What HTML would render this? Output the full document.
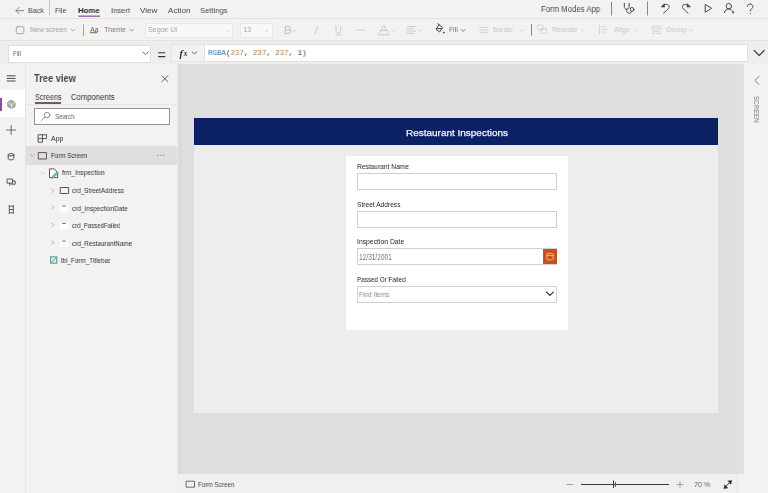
<!DOCTYPE html>
<html><head><meta charset="utf-8">
<style>
*{margin:0;padding:0;box-sizing:border-box}
html,body{width:768px;height:493px;overflow:hidden;background:#f3f2f1;font-family:"Liberation Sans",sans-serif;color:#323130}
.a{position:absolute}
.t{position:absolute;white-space:nowrap;line-height:1;transform-origin:0 0;will-change:transform}
svg{position:absolute;overflow:visible}
</style></head><body>
<!-- top bar -->
<div class="a" style="left:0;top:0;width:768px;height:18px;background:#f3f2f1"></div>
<div class="a" style="left:0;top:18px;width:768px;height:1px;background:#e4e2e0"></div>
<!-- toolbar -->
<div class="a" style="left:0;top:19px;width:768px;height:22px;background:#f3f2f1"></div>
<div class="a" style="left:0;top:40px;width:768px;height:1px;background:#e4e2e0"></div>
<!-- formula row -->
<div class="a" style="left:0;top:41px;width:768px;height:23px;background:#efeeed"></div>
<div class="a" style="left:8px;top:45px;width:143px;height:17.5px;background:#fff;border:1px solid #e1dfdd"></div>
<div class="a" style="left:171px;top:44px;width:34px;height:18px;background:#f3f2f1;border:1px solid #e6e4e2"></div>
<div class="a" style="left:204px;top:44px;width:544px;height:18px;background:#fff;border:1px solid #e1dfdd"></div>
<!-- left rail -->
<div class="a" style="left:0;top:64px;width:26px;height:429px;background:#f3f2f1;border-right:1px solid #e6e4e2"></div>
<div class="a" style="left:0;top:90px;width:25px;height:27px;background:#fff"></div>
<div class="a" style="left:0;top:97.5px;width:2px;height:13.5px;background:#8a4a9c"></div>
<!-- tree panel -->
<div class="a" style="left:26px;top:64px;width:152px;height:429px;background:#f3f2f1;border-right:1px solid #ebeae9"></div>
<div class="a" style="left:27px;top:104px;width:150px;height:1px;background:#e8e6e4"></div>
<div class="a" style="left:34.5px;top:102px;width:26.5px;height:2px;background:#6f557f"></div>
<div class="a" style="left:34px;top:108px;width:136px;height:17px;background:#fff;border:1px solid #979593"></div>
<div class="a" style="left:26px;top:146px;width:151px;height:19px;background:#e1dfdd"></div>
<!-- canvas -->
<div class="a" style="left:178px;top:64px;width:566px;height:410px;background:#dfdfdf"></div>
<div class="a" style="left:178px;top:64px;width:4px;height:410px;background:#dadada"></div>
<!-- status bar -->
<div class="a" style="left:178px;top:474px;width:566px;height:19px;background:#f0f0f0"></div>
<div class="a" style="left:737px;top:64px;width:7px;height:410px;background:#e1e1e1"></div>
<div class="a" style="left:737px;top:474px;width:7px;height:19px;background:#f3f3f3;border-left:1px solid #e6e6e6"></div>
<!-- right panel -->
<div class="a" style="left:744px;top:64px;width:24px;height:429px;background:#f3f2f1"></div>
<!-- screen -->
<div class="a" style="left:194px;top:117.5px;width:524px;height:295px;background:#ededed"></div>
<div class="a" style="left:194px;top:118px;width:523.5px;height:26.5px;background:#0b2163"></div>
<div class="a" style="left:346px;top:156px;width:222px;height:174px;background:#fff"></div>
<!-- form inputs -->
<div class="a" style="left:357px;top:173px;width:200px;height:17px;border:1px solid #d2d0ce;background:#fff"></div>
<div class="a" style="left:357px;top:211px;width:200px;height:17px;border:1px solid #d2d0ce;background:#fff"></div>
<div class="a" style="left:357px;top:248px;width:200px;height:17px;border:1px solid #d2d0ce;background:#fff"></div>
<div class="a" style="left:543px;top:248.5px;width:14px;height:15.5px;background:#c8501e"></div>
<div class="a" style="left:357px;top:286px;width:200px;height:17px;border:1px solid #d2d0ce;background:#fff"></div>
<div class="a" style="left:145px;top:23px;width:88px;height:15px;background:#f8f8f8;border:1px solid #ebe9e7"></div>
<div class="a" style="left:240px;top:23px;width:33px;height:15px;background:#f8f8f8;border:1px solid #ebe9e7"></div>
<!-- TEXTS -->
<div class="t" style="left:28.38px;top:6.54px;font-size:8.1px;color:#484644;transform:scaleX(0.882)">Back</div>
<div class="t" style="left:55.38px;top:6.54px;font-size:8.1px;color:#484644;transform:scaleX(0.879)">File</div>
<div class="t" style="left:78.28px;top:6.54px;font-size:8.1px;font-weight:700;color:#252423;transform:scaleX(0.966)">Home</div>
<div class="t" style="left:110.58px;top:6.54px;font-size:8.1px;color:#484644;transform:scaleX(0.934)">Insert</div>
<div class="t" style="left:140.18px;top:6.54px;font-size:8.1px;color:#484644;transform:scaleX(0.979)">View</div>
<div class="t" style="left:167.68px;top:6.54px;font-size:8.1px;color:#484644;transform:scaleX(0.993)">Action</div>
<div class="t" style="left:200.48px;top:6.54px;font-size:8.1px;color:#484644;transform:scaleX(0.937)">Settings</div>
<div class="t" style="left:540.90px;top:5.27px;font-size:8.66px;color:#484644;transform:scaleX(0.898)">Form Modes App</div>
<div class="t" style="left:29.58px;top:26.16px;font-size:7.96px;color:#a19f9d;transform:scaleX(0.885)">New screen</div>
<div class="t" style="left:103.98px;top:26.16px;font-size:7.96px;color:#797775;transform:scaleX(0.883)">Theme</div>
<div class="t" style="left:148.18px;top:26.16px;font-size:7.96px;color:#a19f9d;transform:scaleX(0.882)">Segoe UI</div>
<div class="t" style="left:243.43px;top:26.16px;font-size:7.96px;color:#a19f9d;transform:scaleX(0.912)">13</div>
<div class="t" style="left:449.48px;top:26.16px;font-size:7.96px;color:#797775;transform:scaleX(0.860)">Fill</div>
<div class="t" style="left:493.48px;top:26.16px;font-size:7.96px;color:#c8c6c4;transform:scaleX(0.839)">Border</div>
<div class="t" style="left:551.68px;top:26.16px;font-size:7.96px;color:#c8c6c4;transform:scaleX(0.900)">Reorder</div>
<div class="t" style="left:614.38px;top:26.16px;font-size:7.96px;color:#c8c6c4;transform:scaleX(0.909)">Align</div>
<div class="t" style="left:666.28px;top:26.16px;font-size:7.96px;color:#c8c6c4;transform:scaleX(0.936)">Group</div>
<div class="t" style="left:13.21px;top:49.85px;font-size:7.26px;color:#605e5c;transform:scaleX(0.852)">Fill</div>
<div class="t" style="left:34.18px;top:73.42px;font-size:10.61px;font-weight:700;color:#484644;transform:scaleX(0.878)">Tree view</div>
<div class="t" style="left:34.66px;top:93.31px;font-size:8.38px;color:#323130;transform:scaleX(0.865)">Screens</div>
<div class="t" style="left:71.36px;top:93.31px;font-size:8.38px;color:#323130;transform:scaleX(0.920)">Components</div>
<div class="t" style="left:54.68px;top:112.54px;font-size:8.1px;color:#605e5c;transform:scaleX(0.750)">Search</div>
<div class="t" style="left:50.65px;top:136.08px;font-size:6.28px;color:#323130;transform:scaleX(1.108)">App</div>
<div class="t" style="left:50.62px;top:153.07px;font-size:7.12px;color:#323130;transform:scaleX(0.876)">Form Screen</div>
<div class="t" style="left:61.92px;top:170.47px;font-size:7.12px;color:#323130;transform:scaleX(0.914)">frm_Inspection</div>
<div class="t" style="left:72.42px;top:187.77px;font-size:7.12px;color:#323130;transform:scaleX(0.883)">crd_StreetAddress</div>
<div class="t" style="left:72.42px;top:205.67px;font-size:7.12px;color:#323130;transform:scaleX(0.909)">crd_InspectionDate</div>
<div class="t" style="left:72.42px;top:222.97px;font-size:7.12px;color:#323130;transform:scaleX(0.850)">crd_PassedFailed</div>
<div class="t" style="left:72.42px;top:240.67px;font-size:7.12px;color:#323130;transform:scaleX(0.892)">crd_RestaurantName</div>
<div class="t" style="left:61.42px;top:257.77px;font-size:7.12px;color:#323130;transform:scaleX(0.897)">lbl_Form_Titlebar</div>
<div class="t" style="left:405.81px;top:127.99px;font-size:9.7px;color:#f4f4f8;-webkit-text-stroke:0.25px #f4f4f8;transform:scaleX(1.029)">Restaurant Inspections</div>
<div class="t" style="left:357.43px;top:163.81px;font-size:6.84px;color:#201f1e;transform:scaleX(0.970)">Restaurant Name</div>
<div class="t" style="left:357.34px;top:201.85px;font-size:6.56px;color:#201f1e;transform:scaleX(1.013)">Street Address</div>
<div class="t" style="left:357.35px;top:239.08px;font-size:6.28px;color:#201f1e;transform:scaleX(1.085)">Inspection Date</div>
<div class="t" style="left:359.26px;top:253.21px;font-size:8.38px;color:#797775;transform:scaleX(0.785)">12/31/2001</div>
<div class="t" style="left:357.39px;top:275.70px;font-size:7.68px;color:#201f1e;transform:scaleX(0.822)">Passed Or Failed</div>
<div class="t" style="left:359.22px;top:291.09px;font-size:6.98px;color:#8a8886;transform:scaleX(0.932)">Find Items</div>
<div class="t" style="left:197.60px;top:480.54px;font-size:7.4px;color:#484644;transform:scaleX(0.855)">Form Screen</div>
<div class="t" style="left:694.30px;top:480.54px;font-size:7.4px;color:#605e5c;transform:scaleX(0.965)">70 %</div>

<!-- TOP BAR ICONS -->
<svg style="left:0;top:0" width="768" height="19">
 <g fill="none" stroke="#484644" stroke-width="1" stroke-linecap="round" stroke-linejoin="round">
  <path d="M16 10.7H23.6 M19 7.6L16 10.7L19 13.8" stroke="#797775" stroke-width="0.9"/>
  <path d="M624.3 3.4V6.6C624.3 8.2 625.4 9.2 626.7 9.2C628 9.2 629.1 8.2 629.1 6.6V3.4 M626.7 9.2V10.6C626.7 12.2 627.8 13.2 629.3 13.2C630.6 13.2 631.6 12.4 631.8 11.4"/>
  <circle cx="632" cy="9.4" r="1.9"/>
  <path d="M663.4 5.6C665.2 3.8 668.6 3.6 669.1 6.6C669.4 8.2 668.2 9.2 663.6 13"/>
  <path d="M687.6 5.6C686.4 3.8 683 3.6 682.5 6.6C682.2 8.2 683.4 9.2 688 13"/>
  <path d="M705.2 4.8V12.3L711.2 8.5Z"/>
  <circle cx="728.8" cy="6.2" r="2.7"/>
  <path d="M724.4 12.6C725 10.2 726.6 9 728.8 9C730.6 9 731.7 10 732.4 11.4"/>
  <path d="M747.3 6.5C747.3 4.9 748.6 4 750 4C751.6 4 752.9 5 752.9 6.6C752.9 8.5 750.2 8.8 750.2 11"/>
 </g>
 <path d="M661 6.9L664.4 3.6L664.6 7.1Z" fill="#484644" stroke="#484644" stroke-width="0.5" stroke-linejoin="round"/>
 <path d="M690.6 6.9L687.2 3.6L687 7.1Z" fill="#484644" stroke="#484644" stroke-width="0.5" stroke-linejoin="round"/>
 <circle cx="733.2" cy="12.6" r="1" fill="#484644"/>
 <circle cx="750.2" cy="13.3" r="0.6" fill="#484644"/>
 <rect x="49" y="0" width="1" height="15.5" fill="#c8c6c4"/>
 <rect x="611" y="2" width="1" height="13.5" fill="#8a8886"/>
 <rect x="647" y="1.5" width="1" height="14" fill="#8a8886"/>
 <rect x="78.5" y="15.5" width="21.5" height="1.4" fill="#9b62a8"/>
</svg>
<!-- TOOLBAR ICONS -->
<svg style="left:0;top:19px" width="768" height="22">
 <g fill="none" stroke-linecap="round" stroke-linejoin="round">
  <rect x="16.3" y="7.8" width="7.6" height="6.8" rx="1.2" stroke="#a19f9d" stroke-width="0.9"/>
  <path d="M71 10.2L72.9 12.1L74.8 10.2" stroke="#a19f9d" stroke-width="0.8"/>
  <path d="M129.8 10.2L131.7 12.1L133.6 10.2" stroke="#8a8886" stroke-width="0.8"/>
  <path d="M226 11.2L227.5 12.6L229 11.2" stroke="#c8c6c4" stroke-width="0.8"/>
  <path d="M265 11.2L266.5 12.6L268 11.2" stroke="#c8c6c4" stroke-width="0.8"/>
  <path d="M292.5 11.5L294 12.8L295.5 11.5" stroke="#c8c6c4" stroke-width="0.8"/>
  <path d="M461.4 10.6L463.2 12.4L465 10.6" stroke="#605e5c" stroke-width="0.8"/>
  <path d="M520.2 10.6L522 12.4L523.8 10.6" stroke="#c8c6c4" stroke-width="0.8"/>
  <path d="M581 10.6L582.8 12.4L584.6 10.6" stroke="#d2d0ce" stroke-width="0.8"/>
  <path d="M634.8 10.6L636.6 12.4L638.4 10.6" stroke="#d2d0ce" stroke-width="0.8"/>
  <path d="M689.2 10.6L691 12.4L692.8 10.6" stroke="#d2d0ce" stroke-width="0.8"/>
  <!-- B -->
  <path d="M285.3 7.5V14.4H288.6C290 14.4 290.8 13.6 290.8 12.5C290.8 11.4 290 10.8 288.6 10.8H285.3M285.3 10.8H288.2C289.4 10.8 290.1 10.2 290.1 9.2C290.1 8.2 289.4 7.5 288.2 7.5H285.3" stroke="#c8c6c4" stroke-width="1.2"/>
  <path d="M317.8 7.2L315 14.6" stroke="#c8c6c4" stroke-width="0.9"/>
  <path d="M336 7.2V11.6C336 13.2 337 14 338.3 14C339.6 14 340.6 13.2 340.6 11.6V7.2 M335.6 16H341" stroke="#c8c6c4" stroke-width="0.9"/>
  <path d="M356.8 11.2H364.6" stroke="#c8c6c4" stroke-width="0.9"/>
  <path d="M379.5 14L383.8 6L388 14 M381 11.5H386.5 M377.8 15.8H390" stroke="#c8c6c4" stroke-width="0.9"/>
  <path d="M392 10.8L393.5 12.2L395 10.8" stroke="#c8c6c4" stroke-width="0.8"/>
  <path d="M407 7.5H415.5 M407 9.8H413.5 M407 12H415.5 M407 14.3H413.5" stroke="#c8c6c4" stroke-width="0.9"/>
  <path d="M418 10.8L419.5 12.2L421 10.8" stroke="#c8c6c4" stroke-width="0.8"/>
  <!-- fill bucket -->
  <path d="M438.8 6L436 10.2L439.6 13L442.4 8.8Z M437 9.6H442 M439 5.8L437.8 4.7" stroke="#484644" stroke-width="1"/>
  <circle cx="443.8" cy="13.6" r="0.9" fill="#484644"/>
  <!-- border lines -->
  <path d="M479.8 8.6H487.8 M479.8 11H487.8 M479.8 13.4H487.8" stroke="#d2d0ce" stroke-width="0.9"/>
  <!-- reorder -->
  <rect x="538" y="6" width="5" height="5" stroke="#c9dcd8" stroke-width="0.9"/>
  <rect x="541.5" y="9.5" width="5" height="5" stroke="#d2d0ce" stroke-width="0.9"/>
  <!-- align -->
  <path d="M599.5 6.5V15 M601.5 8H606 M601.5 10.5H607.5 M601.5 13H605" stroke="#d2d0ce" stroke-width="0.9"/>
  <!-- group -->
  <rect x="652.5" y="7" width="7.5" height="7.5" stroke="#d2d0ce" stroke-width="0.9" stroke-dasharray="1.5 1"/>
  <rect x="654.5" y="9" width="3.5" height="3.5" stroke="#d2d0ce" stroke-width="0.9"/>
 </g>
 <text x="90.2" y="12.6" font-family="Liberation Sans" font-size="6.8" fill="#605e5c">Aa</text>
 <rect x="90" y="13" width="7.4" height="0.9" fill="#797775"/>
 <rect x="90.5" y="14" width="6.4" height="0.9" fill="#f2c9a8"/>
 <rect x="83" y="5.4" width="1" height="11.8" fill="#a19f9d"/>
 <rect x="531" y="5" width="1" height="11.6" fill="#8a8886"/>
</svg>
<!-- FORMULA ICONS -->
<svg style="left:0;top:41px" width="768" height="23">
 <g fill="none" stroke-linecap="round" stroke-linejoin="round">
  <path d="M142.8 11L145.5 13.6L148.2 11" stroke="#605e5c" stroke-width="0.9"/>
  <path d="M192.2 11L194.4 12.8L196.6 11" stroke="#605e5c" stroke-width="0.9"/>
  <path d="M754.2 9.5L759.2 14.5L764.2 9.5" stroke="#484644" stroke-width="1.2"/>
 </g>
 <path d="M158.2 11.8H165.2 M158.2 15.6H165.2" stroke="#323130" stroke-width="1.1"/>
 <text x="179.4" y="15.6" font-family="Liberation Serif" font-style="italic" font-weight="bold" font-size="10.5" fill="#323130">f</text>
 <text x="183.8" y="14.6" font-family="Liberation Serif" font-style="italic" font-weight="bold" font-size="7.5" fill="#323130">x</text>
</svg>
<!-- LEFT RAIL ICONS -->
<svg style="left:0;top:64px" width="26" height="160">
 <g fill="none" stroke="#484644" stroke-width="0.9" stroke-linecap="round" stroke-linejoin="round">
  <path d="M7.2 11.8H15.2 M7.2 14.4H15.2 M7.2 17H15.2" stroke-width="1"/>
  <path d="M11.4 36.5L15 38.5V42.5L11.4 44.5L7.8 42.5V38.5Z" fill="#b3b0ad" stroke="#8a8886"/><path d="M7.8 38.5L11.4 40.6L15 38.5 M11.4 40.6V44.5" stroke="#f3f2f1" stroke-width="0.7"/>
  <path d="M11.2 61.5V70.6 M6.7 66H15.7" stroke="#605e5c"/>
  <path d="M8.2 90.8V94.6C8.2 95.4 9.6 95.9 11 95.9C12.4 95.9 13.8 95.4 13.8 94.6V90.8" />
  <ellipse cx="11" cy="90.8" rx="2.8" ry="1.2"/>
  <path d="M7.5 115H12.5V119.2H7.5Z M9.8 119.2V121.5 M12.5 117H15.2V120.2H11.5"/>
  <path d="M9.3 141.5V149.5 M13.3 141.5V149.5 M9.3 142.2H13.3 M9.3 145.5H13.3 M9.3 148.8H13.3" stroke-width="1" stroke="#605e5c"/>
 </g>
</svg>
<!-- TREE ICONS -->
<svg style="left:26px;top:64px" width="152" height="210">
 <g fill="none" stroke-linecap="round" stroke-linejoin="round">
  <path d="M136 11.8L141.8 17.6 M141.8 11.8L136 17.6" stroke="#605e5c" stroke-width="1"/>
  <circle cx="21.1" cy="51.1" r="2.8" stroke="#8f7fa3" stroke-width="0.9"/>
  <path d="M19.1 53.1L15.4 56.5" stroke="#8f7fa3" stroke-width="0.9"/>
  <path d="M12.5 70.8H20.6V74.6H16.5V78.2H12.5Z M12.5 74.6H16.5 M16.5 70.8V74.6" stroke="#484644" stroke-width="0.9"/>
  <path d="M4.6 90.6L6.2 92.2L7.8 90.6" stroke="#a19f9d" stroke-width="0.8"/>
  <rect x="12.7" y="88.6" width="7.8" height="6.4" stroke="#484644" stroke-width="0.9"/>
  <path d="M14.8 108.2L16.8 110.2L18.8 108.2" stroke="#c8c6c4" stroke-width="0.8"/>
  <path d="M23.9 104.9H28.3L31.6 108.4V113.6H23.9Z" stroke="#484644" stroke-width="0.9" fill="#fff"/>
  <path d="M26 112.6L30.8 107.8L32.2 109.2L27.4 114L25.6 114.2Z" fill="#7cc0c0" stroke="#3a8f8f" stroke-width="0.6"/>
  <path d="M26 124.7L27.7 126.5L26 128.3 M26 141.7L27.7 143.5L26 145.3 M26 159L27.7 160.8L26 162.6 M26 176.7L27.7 178.5L26 180.3" stroke="#a19f9d" stroke-width="0.8"/>
  <rect x="34.6" y="123.5" width="8" height="6" stroke="#484644" stroke-width="0.9"/>
 </g>
 <rect x="34.2" y="141.2" width="8" height="6.4" fill="#fff"/>
 <rect x="36.2" y="141.6" width="3.6" height="0.9" fill="#605e5c"/>
 <rect x="34.2" y="158.5" width="8" height="6.4" fill="#fff"/>
 <rect x="36.2" y="158.9" width="3.6" height="0.9" fill="#605e5c"/>
 <rect x="34.2" y="176.2" width="8" height="6.4" fill="#fff"/>
 <rect x="36.2" y="176.6" width="3.6" height="0.9" fill="#605e5c"/>
 <rect x="24.6" y="192.9" width="6.2" height="6.2" fill="#e6f2f2" stroke="#3a8f8f" stroke-width="1"/>
 <path d="M25.6 198.2L30 193.8" stroke="#3a8f8f" stroke-width="1"/>
 <circle cx="132" cy="91.3" r="0.55" fill="#605e5c"/>
 <circle cx="135" cy="91.3" r="0.55" fill="#605e5c"/>
 <circle cx="138" cy="91.3" r="0.55" fill="#605e5c"/>
</svg>
<!-- CANVAS ICONS -->
<svg style="left:0;top:0" width="768" height="493">
 <g fill="none" stroke-linecap="round" stroke-linejoin="round">
  <rect x="546.8" y="253.6" width="6.4" height="6.2" rx="0.6" stroke="#f0b89c" stroke-width="0.9"/>
  <path d="M546.8 255.6H553.2" stroke="#f0b89c" stroke-width="0.9"/>
  <path d="M546.5 292.2L549.9 295.4L553.3 292.2" stroke="#201f1e" stroke-width="1.1"/>
  <path d="M759 76.5L754.8 80.5L759 84.5" stroke="#797775" stroke-width="0.9"/>
  <rect x="186.5" y="481.2" width="8" height="6" stroke="#605e5c" stroke-width="0.9"/>
  <path d="M567 484.5H573" stroke="#a19f9d" stroke-width="1"/>
  <path d="M677 484.5H683 M680 481.5V487.5" stroke="#a19f9d" stroke-width="1"/>
  <path d="M725.2 487L730.4 481.8" stroke="#323130" stroke-width="1"/>
  <path d="M724 488.4L724.6 484.8L727.6 487.8Z M731.6 480.6L731 484.2L728 481.2Z" fill="#323130" stroke="#323130" stroke-width="0.5"/>
 </g>
 <rect x="581" y="484" width="88" height="1" fill="#3b3a39"/>
 <rect x="613" y="480.5" width="1" height="7.5" fill="#3b3a39"/>
 <rect x="615" y="482" width="1" height="5" fill="#605e5c"/>
</svg>
<div class="t" style="left:753px;top:96px;font-size:7.2px;color:#797775;transform:rotate(90deg) translate(0,-7px) scaleX(0.89);transform-origin:0 0">SCREEN</div>
<div class="t" style="left:207.8px;top:49.2px;font-family:'Liberation Mono';font-size:7.9px;color:#323130;transform:scaleX(0.945)"><span style="color:#3a77a8">RGBA</span>(<span style="color:#b07a42">237</span>, <span style="color:#b07a42">237</span>, <span style="color:#b07a42">237</span>, <span style="color:#323130">1</span>)</div>

</body></html>
